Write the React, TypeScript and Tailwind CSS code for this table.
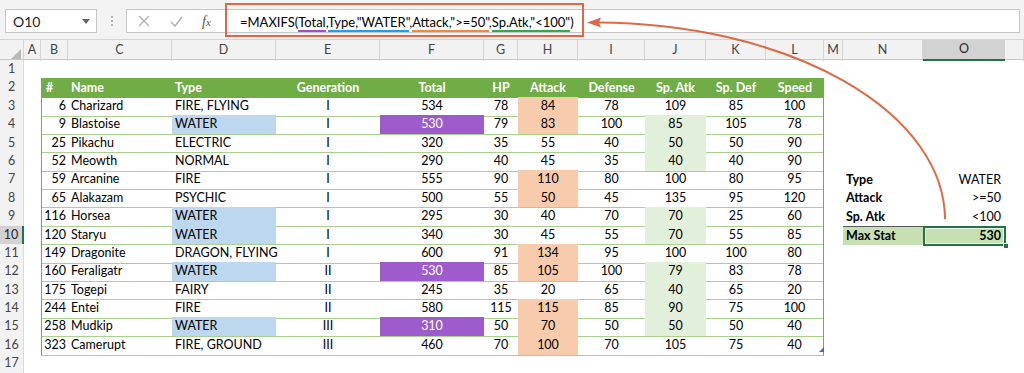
const cols =
  "grid grid-cols-[24px_17px_27px_104px_104px_104px_104px_34px_60px_67px_61px_60px_58px_19px_80px_82px_1fr]";

const letters = ["A", "B", "C", "D", "E", "F", "G", "H", "I", "J", "K", "L", "M", "N", "O", ""];

type Row = [number, string, string, string, number, number, number, number, number, number, number];

const data: Row[] = [
  [6, "Charizard", "FIRE, FLYING", "I", 534, 78, 84, 78, 109, 85, 100],
  [9, "Blastoise", "WATER", "I", 530, 79, 83, 100, 85, 105, 78],
  [25, "Pikachu", "ELECTRIC", "I", 320, 35, 55, 40, 50, 50, 90],
  [52, "Meowth", "NORMAL", "I", 290, 40, 45, 35, 40, 40, 90],
  [59, "Arcanine", "FIRE", "I", 555, 90, 110, 80, 100, 80, 95],
  [65, "Alakazam", "PSYCHIC", "I", 500, 55, 50, 45, 135, 95, 120],
  [116, "Horsea", "WATER", "I", 295, 30, 40, 70, 70, 25, 60],
  [120, "Staryu", "WATER", "I", 340, 30, 45, 55, 70, 55, 85],
  [149, "Dragonite", "DRAGON, FLYING", "I", 600, 91, 134, 95, 100, 100, 80],
  [160, "Feraligatr", "WATER", "II", 530, 85, 105, 100, 79, 83, 78],
  [175, "Togepi", "FAIRY", "II", 245, 35, 20, 65, 40, 65, 20],
  [244, "Entei", "FIRE", "II", 580, 115, 115, 85, 90, 75, 100],
  [258, "Mudkip", "WATER", "III", 310, 50, 70, 50, 50, 50, 40],
  [323, "Camerupt", "FIRE, GROUND", "III", 460, 70, 100, 70, 105, 75, 40],
];

// rows (0-based in data) that the screenshot shades
const attackHi = [0, 1, 4, 5, 8, 9, 11, 12, 13];
const spAtkHi = [1, 2, 3, 6, 7, 9, 10, 11, 12];
const totalHi = [1, 9, 12];

const side: Record<number, [string, string]> = {
  7: ["Type", "WATER"],
  8: ["Attack", ">=50"],
  9: ["Sp. Atk", "<100"],
};

function RowHead({ n }: { n: number }) {
  const sel = n === 10;
  return (
    <div
      className={`flex items-center justify-center border-b text-[12.5px] ${
        sel
          ? "bg-[#d2d2d2] border-b-[#c6c6c6] border-r-2 border-r-[#217346] text-[#262626]"
          : "bg-[#f2f2f2] border-r border-[#dadada] text-[#444]"
      }`}
    >
      {n}
    </div>
  );
}

export default function App() {
  const cell =
    "flex items-center whitespace-nowrap border-b border-[#a9d08e] text-[12.5px] text-black";
  const head = "bg-[#70ad47] text-white font-bold text-[12.5px] flex items-center whitespace-nowrap";
  return (
    <div className="relative w-[1024px] h-[373px] overflow-hidden bg-white font-['Lato',sans-serif]">
      {/* toolbar */}
      <div className="h-[40px] bg-[#f3f3f3] border-b border-[#d4d4d4] flex items-start pt-[9px]">
        <div className="ml-[5px] w-[92px] h-[24px] bg-white border border-[#c6c6c6] flex items-center justify-between pl-[7px] pr-[6px] text-[14px] text-[#222]">
          <span>O10</span>
          <svg width="8" height="5" viewBox="0 0 8 5">
            <path d="M0 0h8L4 5z" fill="#666" />
          </svg>
        </div>
        <div className="w-[29px] h-[24px] flex flex-col items-center justify-center gap-[2px]">
          <span className="w-[2px] h-[2px] bg-[#b5b5b5]" />
          <span className="w-[2px] h-[2px] bg-[#b5b5b5]" />
          <span className="w-[2px] h-[2px] bg-[#b5b5b5]" />
        </div>
        <div className="flex-1 mr-[4px] h-[24px] bg-white border border-[#c6c6c6] flex items-center">
          <div className="w-[100px] flex items-center h-full">
            <svg className="ml-[11px]" width="12" height="12" viewBox="0 0 12 12">
              <path d="M1 1l10 10M11 1L1 11" stroke="#b0b0b0" strokeWidth="1.4" />
            </svg>
            <svg className="ml-[20px]" width="13" height="11" viewBox="0 0 13 11">
              <path d="M1 6l4 4 7-9" stroke="#b0b0b0" strokeWidth="1.5" fill="none" />
            </svg>
            <span className="ml-[19px] italic font-['Liberation_Serif',serif] text-[14px] text-[#555]">
              f<span className="text-[11px]">x</span>
            </span>
          </div>
          <div className="ml-[13px] mt-[1px] text-[13px] text-black leading-[18px] whitespace-pre">
            =MAXIFS(
            <span className="border-b-2 border-[#a04dc8]">Total</span>,
            <span className="border-b-2 border-[#1ea1e6]">Type,"WATER"</span>,
            <span className="border-b-2 border-[#f0883e]">Attack,"&gt;=50"</span>,
            <span className="border-b-2 border-[#36a849]">Sp.Atk,"&lt;100"</span>)
          </div>
        </div>
      </div>

      {/* column headers */}
      <div className={`${cols} h-[20px] bg-[#f2f2f2] border-b border-[#c6c6c6]`}>
        <div className="border-r border-[#d4d4d4] flex items-end justify-end pr-[2px] pb-[2px]">
          <svg width="10" height="10" viewBox="0 0 10 10">
            <path d="M10 0v10H0z" fill="#b8b8b8" />
          </svg>
        </div>
        {letters.map((l, i) => (
          <div
            key={i}
            className={`flex items-center justify-center text-[12.5px] ${
              l === "O"
                ? "bg-[#d2d2d2] border-b-2 border-[#217346] text-[#262626]"
                : "border-r border-[#d4d4d4] text-[#444]"
            }`}
          >
            {l}
          </div>
        ))}
      </div>

      {/* rows */}
      {Array.from({ length: 17 }, (_, k) => {
        const n = k + 1;
        const di = n - 3;
        const d = di >= 0 && di < data.length ? data[di] : null;
        const isHead = n === 2;
        const s = side[n];
        return (
          <div key={n} className={`${cols} h-[18.4px]`}>
            <RowHead n={n} />
            <div />
            {isHead ? (
              <>
                <div className={`${head} pl-[4px] border-l border-[#70ad47]`}>#</div>
                <div className={`${head} pl-[3px]`}>Name</div>
                <div className={`${head} pl-[3px]`}>Type</div>
                {["Generation", "Total", "HP", "Attack", "Defense", "Sp. Atk", "Sp. Def", "Speed"].map((h) => (
                  <div key={h} className={`${head} justify-center`}>
                    {h}
                  </div>
                ))}
              </>
            ) : d ? (
              <>
                <div className={`${cell} justify-end pr-[2px] border-l border-l-[#70ad47]`}>{d[0]}</div>
                <div className={`${cell} pl-[3px]`}>{d[1]}</div>
                <div className={`${cell} pl-[3px] ${d[2] === "WATER" ? "bg-[#bdd7ee]" : ""}`}>{d[2]}</div>
                <div className={`${cell} justify-center`}>{d[3]}</div>
                <div className={`${cell} justify-center ${totalHi.includes(di) ? "bg-[#9e5bcc] text-white" : ""}`}>{d[4]}</div>
                <div className={`${cell} justify-center`}>{d[5]}</div>
                <div className={`${cell} justify-center ${attackHi.includes(di) ? "bg-[#f8cbad]" : ""}`}>{d[6]}</div>
                <div className={`${cell} justify-center`}>{d[7]}</div>
                <div className={`${cell} justify-center ${spAtkHi.includes(di) ? "bg-[#e2efda]" : ""}`}>{d[8]}</div>
                <div className={`${cell} justify-center`}>{d[9]}</div>
                <div className={`${cell} justify-center border-r border-r-[#70ad47]`}>{d[10]}</div>
              </>
            ) : (
              <>
                {Array.from({ length: 11 }, (_, j) => (
                  <div key={j} />
                ))}
              </>
            )}
            <div />
            {n === 10 ? (
              <>
                <div className="bg-[#c6e0b4] border-t border-[#595959] flex items-center pl-[3px] font-bold text-[12.5px] text-black whitespace-nowrap">
                  Max Stat
                </div>
                <div className="relative bg-[#c6e0b4] border-t border-[#595959]">
                  <div className="absolute inset-[-1px_-1px_-1px_0px] border-2 border-[#217346] flex items-center justify-end pr-[3px] font-bold text-[12.5px] text-black">
                    <div className="absolute inset-0 border border-white/70" />
                    530
                  </div>
                  <div className="absolute right-[-4px] bottom-[-4px] w-[6px] h-[6px] bg-[#217346] border border-white" />
                </div>
              </>
            ) : s ? (
              <>
                <div className="flex items-center pl-[3px] font-bold text-[12.5px] text-black whitespace-nowrap">{s[0]}</div>
                <div className="flex items-center justify-end pr-[4px] text-[12.5px] text-black">{s[1]}</div>
              </>
            ) : (
              <>
                <div />
                <div />
              </>
            )}
            <div />
          </div>
        );
      })}

      {/* table resize handle */}
      <svg className="absolute left-[819px] top-[347px]" width="5" height="5" viewBox="0 0 5 5">
        <path d="M5 0v5H0z" fill="#3f6fa8" />
      </svg>

      {/* annotation: box around formula and arrow */}
      <svg className="absolute inset-0 pointer-events-none" width="1024" height="373" viewBox="0 0 1024 373">
        <rect x="226" y="4" width="357" height="32" fill="none" stroke="#de6a45" strokeWidth="2" />
        <path d="M945 219 A350 197 0 0 0 598 22.5" fill="none" stroke="#de6a45" strokeWidth="2" />
        <path d="M587 22.5 L601 17.5 L599 22.5 L601 27.5 Z" fill="#de6a45" />
      </svg>
    </div>
  );
}
